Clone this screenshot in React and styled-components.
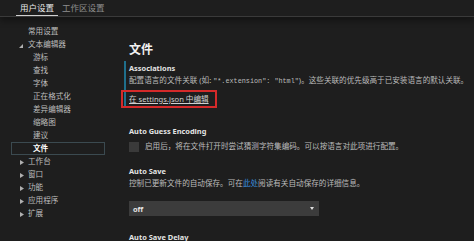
import React from 'react';
import styled, { createGlobalStyle } from 'styled-components';

const GlobalStyle = createGlobalStyle`
  html, body {
    margin: 0;
    padding: 0;
    background: #1e1e1e;
    width: 474px;
    height: 241px;
    overflow: hidden;
  }
  body {
    font-family: "Noto Sans", "Noto Sans CJK SC", sans-serif;
    color: #c5c5c5;
  }
`;

const Page = styled.div`
  width: 474px;
  height: 241px;
  display: flex;
  flex-direction: column;
  overflow: hidden;
`;

const TabBar = styled.div`
  display: flex;
  height: 16px;
  padding-left: 16px;
  border-bottom: 1px solid #3a3a3a;
  box-shadow: 0 4px 6px rgba(0, 0, 0, 0.35);
  position: relative;
  z-index: 1;
`;

const Tab = styled.div`
  padding: 0 4px;
  font-size: 8.5px;
  line-height: 15px;
  color: ${p => (p.$active ? '#e8e8e8' : '#8f8f8f')};
  border-bottom: 1px solid ${p => (p.$active ? '#d0d0d0' : 'transparent')};
`;

const Body = styled.div`
  flex: 1;
  display: grid;
  grid-template-columns: 124px 1fr;
  align-items: start;
`;

const Tree = styled.ul`
  list-style: none;
  margin: 0;
  padding: 8px 0 0 11px;
`;

const TreeItem = styled.li`
  height: 13px;
  width: 94px;
  box-sizing: border-box;
  display: flex;
  align-items: center;
  padding-left: ${p => (p.$level === 2 ? 21 : 16)}px;
  font-size: 7.6px;
  line-height: 13px;
  color: ${p => (p.$selected ? '#ffffff' : '#bdbdbd')};
  font-weight: ${p => (p.$selected ? 700 : 400)};
  border: 1px solid ${p => (p.$selected ? '#3b4a50' : 'transparent')};
  position: relative;
`;

const Twisty = styled.svg`
  position: absolute;
  left: ${p => (p.$open ? 7 : 8)}px;
  top: ${p => (p.$open ? 5 : 3.5)}px;
  width: 4px;
  height: 5px;
  fill: #b0b0b0;
`;

const Content = styled.div`
  padding-top: 26px;
`;

const Heading = styled.h1`
  margin: 0 0 4px 5px;
  font-size: 12px;
  line-height: 14px;
  font-weight: 700;
  color: #f0f0f0;
`;

const Setting = styled.div`
  padding: 2px 0 4px 3px;
  margin-bottom: ${p => p.$gap || 0}px;
  border-left: 2px solid ${p => (p.$focused ? '#1f6f8c' : 'transparent')};
`;

const Title = styled.div`
  font-size: 7.4px;
  line-height: 11px;
  font-weight: 700;
  color: #e4e4e4;
`;

const Desc = styled.div`
  font-size: 7.6px;
  line-height: 13px;
  color: #bcbcbc;
  white-space: nowrap;
`;

const Code = styled.span`
  font-family: "Liberation Mono", "DejaVu Sans Mono", monospace;
  font-size: 6.8px;
`;

const DescLink = styled.span`
  color: #3a8dde;
`;

const EditLink = styled.div`
  width: fit-content;
  margin-top: 6px;
  font-size: 7.6px;
  line-height: 10px;
  color: #d0d0d0;
  text-decoration: underline;
  position: relative;

  &::after {
    content: '';
    position: absolute;
    left: -8px;
    right: -8px;
    top: -4px;
    bottom: -4px;
    border: 2px solid #d42a2a;
  }
`;

const CheckRow = styled.div`
  display: flex;
  align-items: center;
  gap: 6px;
  margin-top: 3px;
`;

const Checkbox = styled.div`
  width: 10px;
  height: 10px;
  background: #3a3a3a;
`;

const Select = styled.div`
  width: 190px;
  height: 15px;
  margin-top: 11px;
  background: #3c3c3c;
  display: flex;
  align-items: center;
  justify-content: space-between;
  padding: 0 4px;
  box-sizing: border-box;
  font-size: 7.4px;
  font-weight: 700;
  color: #e6e6e6;
`;

const Caret = styled.svg`
  width: 4px;
  height: 3px;
  fill: #e0e0e0;
  margin-right: 1px;
`;

const treeItems = [
  { label: '常用设置', level: 1 },
  { label: '文本编辑器', level: 1, twisty: 'open' },
  { label: '游标', level: 2 },
  { label: '查找', level: 2 },
  { label: '字体', level: 2 },
  { label: '正在格式化', level: 2 },
  { label: '差异编辑器', level: 2 },
  { label: '缩略图', level: 2 },
  { label: '建议', level: 2 },
  { label: '文件', level: 2, selected: true },
  { label: '工作台', level: 1, twisty: 'closed' },
  { label: '窗口', level: 1, twisty: 'closed' },
  { label: '功能', level: 1, twisty: 'closed' },
  { label: '应用程序', level: 1, twisty: 'closed' },
  { label: '扩展', level: 1, twisty: 'closed' },
];

const TwistyIcon = ({ open }) => (
  <Twisty viewBox="0 0 4 5" $open={open}>
    {open ? <polygon points="4,0 4,4 0,4" /> : <polygon points="0,0 4,2.5 0,5" />}
  </Twisty>
);

export default function App() {
  return (
    <Page>
      <GlobalStyle />
      <TabBar>
        <Tab $active>用户设置</Tab>
        <Tab>工作区设置</Tab>
      </TabBar>
      <Body>
        <Tree>
          {treeItems.map(item => (
            <TreeItem key={item.label} $level={item.level} $selected={item.selected}>
              {item.twisty && <TwistyIcon open={item.twisty === 'open'} />}
              {item.label}
            </TreeItem>
          ))}
        </Tree>
        <Content>
          <Heading>文件</Heading>
          <Setting $focused $gap={16}>
            <Title>Associations</Title>
            <Desc>
              配置语言的文件关联 (如: <Code>"*.extension": "html"</Code>)。这些关联的优先级高于已安装语言的默认关联。
            </Desc>
            <EditLink>在 settings.json 中编辑</EditLink>
          </Setting>
          <Setting $gap={7}>
            <Title>Auto Guess Encoding</Title>
            <CheckRow>
              <Checkbox />
              <Desc>启用后，将在文件打开时尝试猜测字符集编码。可以按语言对此项进行配置。</Desc>
            </CheckRow>
          </Setting>
          <Setting $gap={10}>
            <Title>Auto Save</Title>
            <Desc>
              控制已更新文件的自动保存。可在<DescLink>此处</DescLink>阅读有关自动保存的详细信息。
            </Desc>
            <Select>
              off
              <Caret viewBox="0 0 4 3">
                <polygon points="0,0 4,0 2,3" />
              </Caret>
            </Select>
          </Setting>
          <Setting>
            <Title>Auto Save Delay</Title>
          </Setting>
        </Content>
      </Body>
    </Page>
  );
}
